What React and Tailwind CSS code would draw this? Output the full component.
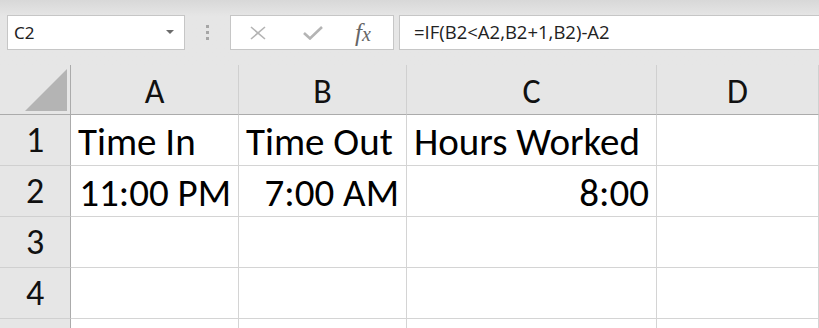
const COLS = ["A", "B", "C", "D"];

const ROWS = [
  { n: "1", cells: ["Time In", "Time Out", "Hours Worked", ""], align: "left" },
  { n: "2", cells: ["11:00 PM", "7:00 AM", "8:00", ""], align: "right" },
  { n: "3", cells: ["", "", "", ""] },
  { n: "4", cells: ["", "", "", ""] },
  { n: "", cells: ["", "", "", ""] },
];

const cellFont = { fontFamily: "Carlito, 'Open Sans', sans-serif" };

const App = () => {
  return (
    <div className="w-[819px] h-[328px] overflow-hidden bg-white font-['Noto_Sans',sans-serif]">
      {/* Formula bar */}
      <div className="h-[65px] bg-gradient-to-b from-[#d8d8d8] via-[#e6e6e6] via-[25%] to-[#e6e6e6] pt-[15px] flex items-start">
        <div className="ml-[7px] w-[178px] h-[35px] bg-white border border-[#c6c6c6] flex items-center justify-between pl-[6px] pr-[10px]">
          <span className="text-[17px] text-[#222] leading-none">C2</span>
          <svg width="8" height="5" viewBox="0 0 8 5">
            <path d="M0 0 L8 0 L4 4 Z" fill="#6b6b6b" />
          </svg>
        </div>
        <div className="w-[45px] h-[35px] flex flex-col items-center justify-center gap-[3px]">
          <div className="w-[3px] h-[3px] bg-[#a6a6a6]" />
          <div className="w-[3px] h-[3px] bg-[#a6a6a6]" />
          <div className="w-[3px] h-[3px] bg-[#a6a6a6]" />
        </div>
        <div className="w-[164px] h-[35px] bg-white border border-[#c6c6c6] flex items-center">
          <svg className="ml-[18px]" width="18" height="14" viewBox="0 0 18 14">
            <path d="M2 1 L16 13 M16 1 L2 13" stroke="#b4b4b4" strokeWidth="1.6" fill="none" />
          </svg>
          <svg className="ml-[36px]" width="20" height="14" viewBox="0 0 20 14">
            <path d="M1 7 L7 12.5 L19 1" stroke="#b4b4b4" strokeWidth="2.6" fill="none" />
          </svg>
          <span className="ml-[32px] text-[25px] leading-none italic text-[#666] font-['Liberation_Serif',serif]">
            f<span className="text-[20px]">x</span>
          </span>
        </div>
        <div className="ml-[5px] flex-1 h-[35px] bg-white border border-[#c6c6c6] border-r-0 flex items-center pl-[14px]">
          <span className="text-[18.5px] text-[#222] leading-none font-['Open_Sans',sans-serif]">
            =IF(B2&lt;A2,B2+1,B2)-A2
          </span>
        </div>
      </div>

      {/* Grid */}
      <div className="grid grid-cols-[71px_168px_168px_250px_1fr] grid-rows-[50px_51px_51px_51px_51px_51px]">
        <div className="bg-[#e6e6e6] border-r border-b border-[#ababab] relative">
          <svg className="absolute left-[25px] top-[4px]" width="42" height="42" viewBox="0 0 42 42">
            <path d="M42 0 L42 42 L0 42 Z" fill="#b4b4b4" />
          </svg>
        </div>
        {COLS.map((c) => (
          <div
            key={c}
            className="bg-[#e6e6e6] border-r border-b border-r-[#d0d0d0] border-b-[#ababab] flex items-center justify-center text-[34px] leading-none pt-[4px] text-[#111]"
            style={cellFont}
          >
            {c}
          </div>
        ))}
        {ROWS.map((row, r) => (
          <div key={r} className="contents">
            <div
              className="bg-[#e6e6e6] border-r border-b border-r-[#ababab] border-b-[#d0d0d0] flex items-end justify-center text-[36px] leading-none pb-[7px] text-[#111]"
              style={cellFont}
            >
              {row.n}
            </div>
            {row.cells.map((v, i) => (
              <div
                key={i}
                className={`border-r border-b border-[#d4d4d4] flex items-end pb-[4px] text-[39px] leading-none text-black whitespace-nowrap ${
                  row.align === "right" ? "justify-end pr-[7px]" : "justify-start pl-[7px]"
                }`}
                style={cellFont}
              >
                {v}
              </div>
            ))}
          </div>
        ))}
      </div>
    </div>
  );
};

export default App;
